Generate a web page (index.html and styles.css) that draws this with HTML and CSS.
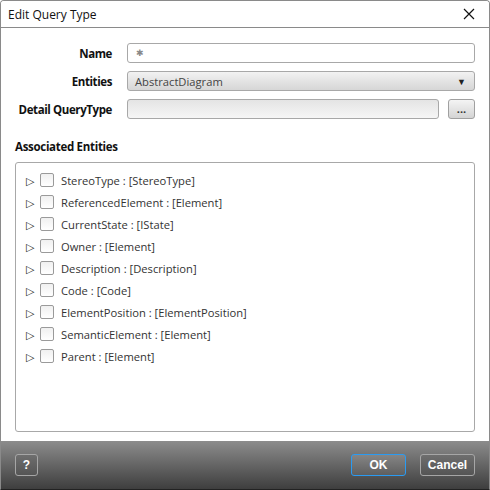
FILE: index.html
```html
<!DOCTYPE html>
<html lang="en">
<head>
  <meta charset="UTF-8">
  <title>Edit Query Type</title>
  <link rel="stylesheet" href="styles.css">
</head>
<body>
  <div class="window">
    <div class="title-bar">
      <span class="title">Edit Query Type</span>
      <svg class="close" width="12" height="12" viewBox="0 0 12 12">
        <path d="M1 1 L11 11 M11 1 L1 11" stroke="#111" stroke-width="1.2" fill="none"/>
      </svg>
    </div>

    <div class="content">
      <div class="form">
        <label>Name</label>
        <div class="textbox">&#10033;</div>

        <label>Entities</label>
        <div class="combo">
          <span>AbstractDiagram</span>
          <span class="arrow">&#9660;</span>
        </div>

        <label>Detail QueryType</label>
        <div class="picker">
          <div class="textbox readonly"></div>
          <button class="dots">...</button>
        </div>
      </div>

      <h2 class="section">Associated Entities</h2>

      <div class="tree">
        <div class="node"><span class="expander">&#9655;</span><span class="check"></span><span>StereoType : [StereoType]</span></div>
        <div class="node"><span class="expander">&#9655;</span><span class="check"></span><span>ReferencedElement : [Element]</span></div>
        <div class="node"><span class="expander">&#9655;</span><span class="check"></span><span>CurrentState : [IState]</span></div>
        <div class="node"><span class="expander">&#9655;</span><span class="check"></span><span>Owner : [Element]</span></div>
        <div class="node"><span class="expander">&#9655;</span><span class="check"></span><span>Description : [Description]</span></div>
        <div class="node"><span class="expander">&#9655;</span><span class="check"></span><span>Code : [Code]</span></div>
        <div class="node"><span class="expander">&#9655;</span><span class="check"></span><span>ElementPosition : [ElementPosition]</span></div>
        <div class="node"><span class="expander">&#9655;</span><span class="check"></span><span>SemanticElement : [Element]</span></div>
        <div class="node"><span class="expander">&#9655;</span><span class="check"></span><span>Parent : [Element]</span></div>
      </div>
    </div>

    <div class="footer">
      <button class="btn help">?</button>
      <div class="actions">
        <button class="btn default">OK</button>
        <button class="btn">Cancel</button>
      </div>
    </div>
  </div>
</body>
</html>
```

FILE: styles.css
```css
/* Reset */
* {
  margin: 0;
  padding: 0;
  box-sizing: border-box;
}

body {
  font-family: "Open Sans", "Noto Sans", sans-serif;
  font-size: 11.2px;
  color: #222;
  background-color: #fff;
}

/* Janela */
.window {
  width: 490px;
  height: 490px;
  display: flex;
  flex-direction: column;
  border: 1px solid #8a8a8a;
  border-bottom-color: #222;
  border-top-left-radius: 4px;
  border-top-right-radius: 4px;
  overflow: hidden;
}

.title-bar {
  height: 27px;
  flex-shrink: 0;
  display: flex;
  align-items: center;
  justify-content: space-between;
  padding: 0 14px 0 7px;
  border-bottom: 1px solid #8a8a8a;
  background-color: #fff;
}

.title {
  font-size: 12px;
  color: #111;
}

/* Conteúdo */
.content {
  flex: 1;
  display: flex;
  flex-direction: column;
  padding: 15px 14px 7px 14px;
}

.form {
  display: grid;
  grid-template-columns: 97px 1fr;
  column-gap: 15px;
  row-gap: 8px;
  align-items: center;
}

.form label {
  text-align: right;
  font-weight: bold;
  font-size: 11.5px;
  white-space: nowrap;
  letter-spacing: -0.4px;
  color: #111;
}

.textbox {
  height: 20px;
  border: 1px solid #a8a8a8;
  border-radius: 3px;
  padding: 0 8px;
  line-height: 18px;
  font-size: 9px;
  color: #888;
  background-color: #fff;
}

.textbox.readonly {
  flex: 1;
  background: linear-gradient(#e4e4e4, #f6f6f6);
}

.combo {
  height: 20px;
  border: 1px solid #a8a8a8;
  border-radius: 3px;
  padding: 0 8px 0 7px;
  display: flex;
  align-items: center;
  justify-content: space-between;
  color: #444;
  background: linear-gradient(#f2f2f2, #d6d6d6);
}

.combo .arrow {
  font-size: 9px;
  color: #222;
}

.picker {
  display: flex;
  gap: 9px;
}

.dots {
  width: 27px;
  height: 20px;
  border: 1px solid #a0a0a0;
  border-radius: 3px;
  background: linear-gradient(#f4f4f4, #d4d4d4);
  font-family: inherit;
  font-size: 11px;
  font-weight: bold;
  line-height: 14px;
  color: #333;
}

.section {
  margin-top: 20px;
  font-size: 11.5px;
  font-weight: bold;
  letter-spacing: -0.3px;
  color: #111;
}

/* Árvore */
.tree {
  margin-top: 8px;
  height: 270px;
  border: 1px solid #a8a8a8;
  border-radius: 3px;
  padding: 6px 0 0 10px;
}

.node {
  height: 22px;
  display: flex;
  align-items: center;
  color: #333;
}

.expander {
  width: 14px;
  font-size: 11px;
  color: #222;
}

.check {
  width: 14px;
  height: 14px;
  border: 1px solid #9a9a9a;
  border-radius: 2px;
  background: linear-gradient(#f0f0f0, #fff);
  margin-right: 7px;
}

/* Rodapé */
.footer {
  height: 48px;
  flex-shrink: 0;
  display: flex;
  align-items: center;
  justify-content: space-between;
  padding: 0 14px 0 14px;
  background: linear-gradient(#8c8c8c, #3e3e3e);
}

.actions {
  display: flex;
  gap: 14px;
}

.btn {
  height: 22px;
  width: 55px;
  border: 1px solid #a6a6a6;
  border-radius: 3px;
  background: linear-gradient(#6e6e6e, #555);
  color: #fff;
  font-family: "Liberation Sans", Arial, sans-serif;
  font-weight: bold;
  font-size: 12px;
}

.btn.help {
  width: 23px;
}

.btn.default {
  border-color: #2a9bf2;
  background: linear-gradient(#858585, #5f5f5f);
}
```
